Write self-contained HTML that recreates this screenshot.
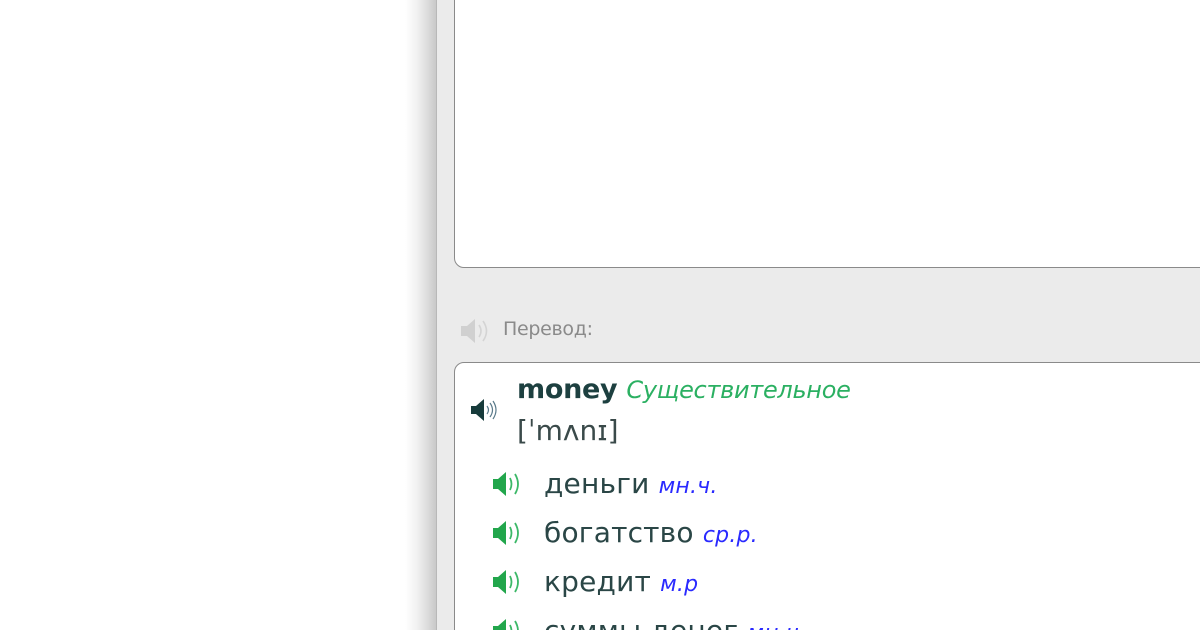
<!DOCTYPE html>
<html><head><meta charset="utf-8"><style>
html,body{margin:0;padding:0;width:1200px;height:630px;overflow:hidden;background:#fff;font-family:"DejaVu Sans","Liberation Sans",sans-serif;}
.shadow{position:absolute;left:405px;top:0;width:32px;height:630px;background:linear-gradient(to right,rgba(255,255,255,0),rgba(0,0,0,0.06) 40%,rgba(0,0,0,0.22));}
.win{position:absolute;left:436px;top:0;width:764px;height:630px;overflow:hidden;background:#ebebeb;border-left:1px solid #b8b8b8;}
.box{position:absolute;left:17px;width:800px;background:#fff;border:1px solid #8a8a8a;border-radius:10px;}
.t{position:absolute;white-space:nowrap;}
.w{font-size:28px;color:#2a4646;letter-spacing:0.2px}
.g{font-size:22px;font-style:italic;color:#2a2aff}
</style></head><body>
<div class="shadow"></div>
<div class="win">
 <div class="box" style="top:-20px;height:286px;"></div>
 <svg class="t" style="left:22px;top:316px" width="34" height="30" viewBox="0 0 34 30"><path d="M2 10h6l8-7v24l-8-7H2z" fill="#d0d0d0"/><path d="M20 9q4 6 0 12M24 5q7 10 0 20" stroke="#d4d4d4" stroke-width="1.6" fill="none"/></svg>
 <div class="t" style="left:66px;top:318px;font-size:19px;color:#8a8a8a;letter-spacing:-0.3px">Перевод:</div>
 <div class="box" style="top:362px;height:300px;"></div>
 <svg class="t" style="left:32px;top:396px" width="34" height="28" viewBox="0 0 34 28"><path d="M2 10h5l8-7v22l-8-7H2z" fill="#173b3b"/><path d="M18 10q3 4 0 8M21 7q5 7 0 14M24 5q6 9 0 18" stroke="#5a7a8a" stroke-width="1.2" fill="none"/></svg>
 <div class="t" style="left:80px;top:374px;font-size:27px;font-weight:bold;color:#1d4040;letter-spacing:-0.3px">money <span style="font-size:24px;font-weight:normal;font-style:italic;color:#2bb062;letter-spacing:-0.3px">Существительное</span></div>
 <div class="t" style="left:80px;top:414px;font-size:28px;color:#3a4a4a">[ˈmʌnɪ]</div>
 <div style="position:absolute;left:54px;top:467px">
  <div style="height:49px;position:relative"><svg class="t" style="left:0;top:3px" width="32" height="28" viewBox="0 0 32 28"><path d="M2 9h5l8-7v24l-8-7H2z" fill="#22a64c"/><path d="M19 8q3 6 0 12M24 4q6 10 0 20" stroke="#3cb868" stroke-width="1.8" fill="none"/></svg><div class="t w" style="left:53px;top:0">деньги <span class="g">мн.ч.</span></div></div>
  <div style="height:49px;position:relative"><svg class="t" style="left:0;top:3px" width="32" height="28" viewBox="0 0 32 28"><path d="M2 9h5l8-7v24l-8-7H2z" fill="#22a64c"/><path d="M19 8q3 6 0 12M24 4q6 10 0 20" stroke="#3cb868" stroke-width="1.8" fill="none"/></svg><div class="t w" style="left:53px;top:0">богатство <span class="g">ср.р.</span></div></div>
  <div style="height:49px;position:relative"><svg class="t" style="left:0;top:3px" width="32" height="28" viewBox="0 0 32 28"><path d="M2 9h5l8-7v24l-8-7H2z" fill="#22a64c"/><path d="M19 8q3 6 0 12M24 4q6 10 0 20" stroke="#3cb868" stroke-width="1.8" fill="none"/></svg><div class="t w" style="left:53px;top:0">кредит <span class="g">м.р</span></div></div>
  <div style="height:49px;position:relative"><svg class="t" style="left:0;top:3px" width="32" height="28" viewBox="0 0 32 28"><path d="M2 9h5l8-7v24l-8-7H2z" fill="#22a64c"/><path d="M19 8q3 6 0 12M24 4q6 10 0 20" stroke="#3cb868" stroke-width="1.8" fill="none"/></svg><div class="t w" style="left:53px;top:0">суммы денег <span class="g">мн.ч.</span></div></div>
 </div>
</div>
</body></html>
